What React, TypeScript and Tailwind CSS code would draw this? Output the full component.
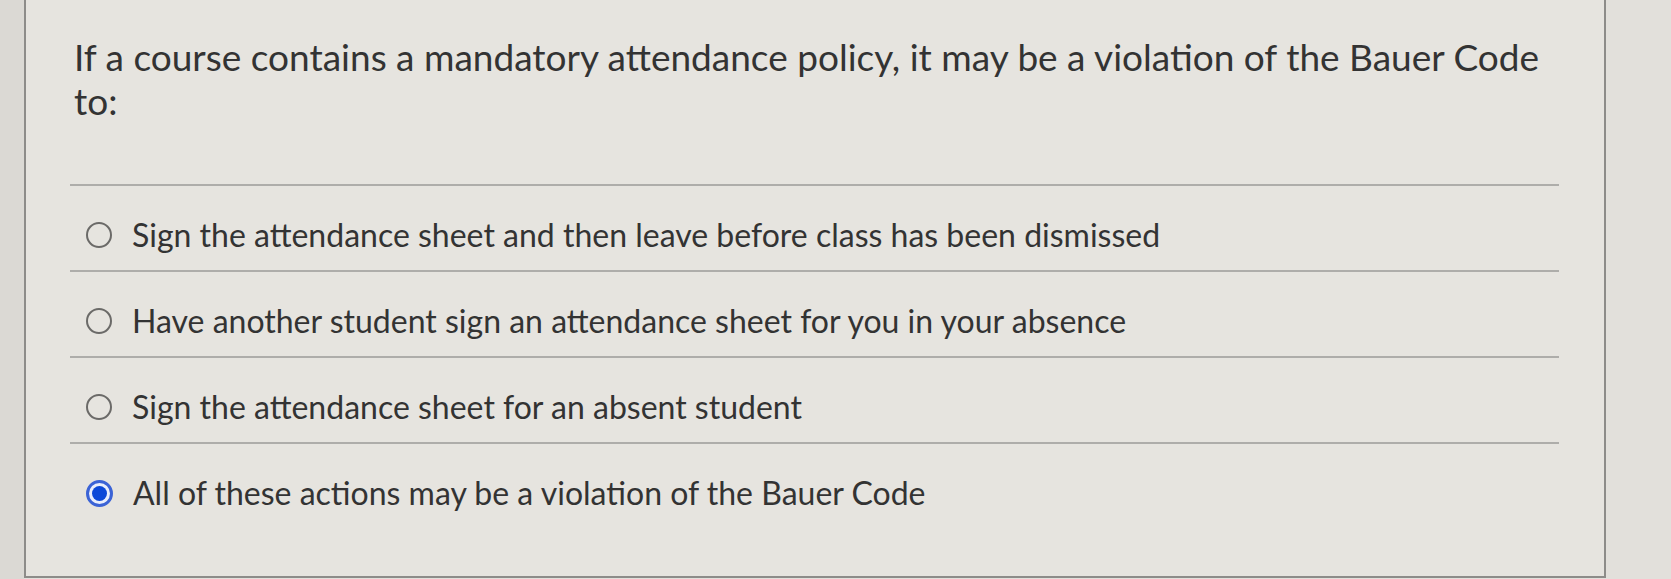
import React from 'react';

const options = [
  { label: 'Sign the attendance sheet and then leave before class has been dismissed', checked: false },
  { label: 'Have another student sign an attendance sheet for you in your absence', checked: false },
  { label: 'Sign the attendance sheet for an absent student', checked: false },
  { label: 'All of these actions may be a violation of the Bauer Code', checked: true },
];

function Radio({ checked }: { checked: boolean }) {
  if (checked) {
    return (
      <span className="flex h-[27px] w-[27px] shrink-0 items-center justify-center rounded-full border-[3px] border-[#3b63d6] bg-[#e9eefc]">
        <span className="h-[15px] w-[15px] rounded-full bg-[#0b48d8]" />
      </span>
    );
  }
  return <span className="h-[26px] w-[26px] shrink-0 rounded-full border-[2.5px] border-[#6b6a68]" />;
}

export default function App() {
  return (
    <div
      className="flex h-[579px] w-[1671px] overflow-hidden bg-[#e2e0db] text-[#333333]"
      style={{ fontFamily: 'Lato, "Open Sans", sans-serif' }}
    >
      <div className="w-[24px] shrink-0 bg-[#dbd9d4]" />
      <div className="flex h-[578px] w-[1582px] shrink-0 flex-col border-x-2 border-b-2 border-[#8d8c89] bg-[#e6e4df] pl-[44px] pr-[45px]">
        <p className="pt-[35px] pl-[4px] text-[37px] leading-[44px]">
          If a course contains a mandatory attendance policy, it may be a violation of the Bauer Code to:
        </p>
        <div className="mt-[61px] flex flex-col">
          {options.map((o) => (
            <div key={o.label} className="flex h-[86px] items-center gap-[20px] border-t-2 border-[#aeadaa] pl-[16px] pt-[14px]">
              <Radio checked={o.checked} />
              <span className="text-[32px] leading-[40px]">{o.label}</span>
            </div>
          ))}
        </div>
      </div>
      <div className="flex-1" />
    </div>
  );
}
